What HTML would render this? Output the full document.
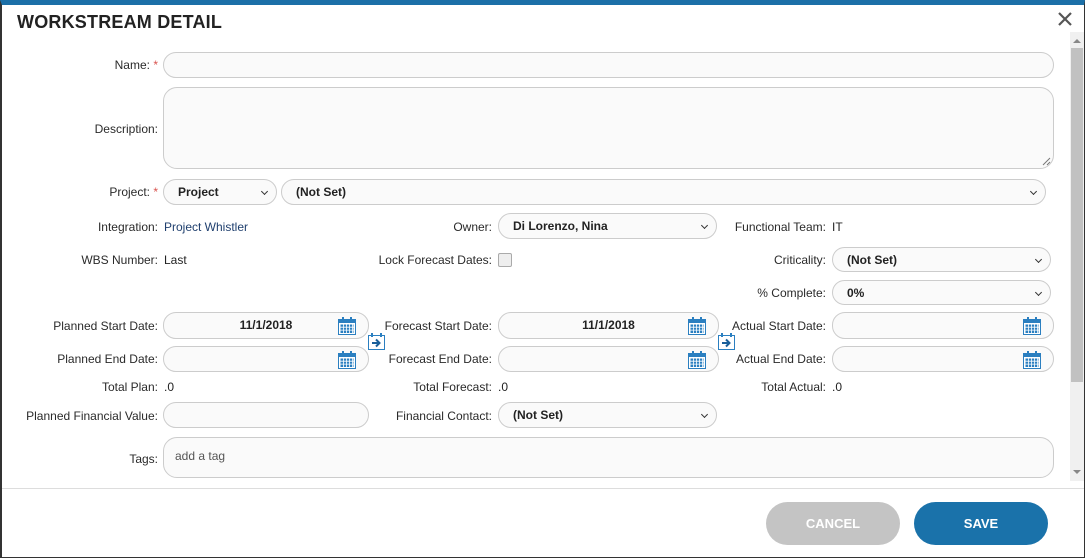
<!DOCTYPE html>
<html><head><style>
*{box-sizing:border-box;margin:0;padding:0}
body{width:1085px;height:558px;position:relative;background:#fff;font-family:"Liberation Sans",sans-serif;font-size:12px;color:#222;overflow:hidden}
.frame{position:absolute;left:0;top:0;width:1085px;height:558px;border:1px solid #333;border-left:2px solid #333;border-top:5px solid #1c70a8}
.l{position:absolute;text-align:right;white-space:nowrap;line-height:14px;color:#2a2a2a}
.l1{left:0;width:158px}.l2{left:300px;width:192px}.l3{left:640px;width:186px}
.v{position:absolute;white-space:nowrap;line-height:14px}
.in{position:absolute;border:1px solid #ccc;border-radius:13px;background:#fafafa}
.sel{font-weight:bold;padding-left:14px;line-height:24px;color:#222}
.sel:after{content:"";position:absolute;right:9px;top:9px;width:4px;height:4px;border-right:1.5px solid #333;border-bottom:1.5px solid #333;transform:rotate(45deg)}
.date{text-align:center;font-weight:bold;line-height:25px}
.cal{position:absolute;right:12px;top:4px}
.req{color:#d9534f}
.arr{position:absolute}
.btn{position:absolute;top:502px;height:43px;width:134px;border-radius:22px;color:#fff;font-weight:bold;font-size:13px;text-align:center;line-height:43px}
</style></head><body>
<div class="frame"></div>
<div style="position:absolute;left:17px;top:12px;font-size:18px;font-weight:bold;color:#222;letter-spacing:0.2px">WORKSTREAM DETAIL</div>
<svg style="position:absolute;left:1057px;top:11px" width="16" height="16"><path d="M2 2L14 14M14 2L2 14" stroke="#555" stroke-width="2.2"/></svg>
<div style="position:absolute;left:1070px;top:32px;width:14px;height:449px;background:#f0f0f0"></div>
<div style="position:absolute;left:1071px;top:48px;width:12px;height:334px;background:#c1c1c1"></div>
<div style="position:absolute;left:1073px;top:39px;border:4px solid transparent;border-bottom:4px solid #888;border-top:0"></div>
<div style="position:absolute;left:1073px;top:470px;border:4px solid transparent;border-top:4px solid #888;border-bottom:0"></div>
<div style="position:absolute;left:2px;top:488px;width:1082px;height:1px;background:#ddd"></div>

<svg width="0" height="0" style="position:absolute"><defs>
<symbol id="c" viewBox="0 0 18 18"><rect x="0.5" y="2.5" width="17" height="15" fill="#fff" stroke="#2b7fc0"/><rect x="1" y="3" width="16" height="3" fill="#2b7fc0"/><rect x="4" y="0" width="2" height="4" fill="#2b7fc0"/><rect x="12" y="0" width="2" height="4" fill="#2b7fc0"/><g fill="#2b7fc0"><rect x="2.5" y="7.5" width="13" height="8.5"/></g><g stroke="#fff" stroke-width="0.8"><path d="M5.5 7.5V16M8.5 7.5V16M11.5 7.5V16M14.5 7.5V16M2.5 10.2H15.5M2.5 13.1H15.5"/></g></symbol>
<symbol id="a" viewBox="0 0 17 17"><rect x="0.5" y="2.5" width="16" height="14" fill="#fff" stroke="#2b7fc0"/><rect x="3" y="0" width="2" height="4" fill="#2b7fc0"/><rect x="12" y="0" width="2" height="4" fill="#2b7fc0"/><path d="M4 10H11M8 6.5L11.5 10L8 13.5" stroke="#1a5f9a" stroke-width="2" fill="none"/></symbol>
</defs></svg>

<div class="l l1" style="top:58px">Name: <span class="req">*</span></div>
<div class="in" style="left:163px;top:52px;width:891px;height:26px"></div>
<div class="l l1" style="top:122px">Description:</div>
<div class="in" style="left:163px;top:87px;width:891px;height:82px;border-radius:14px"><svg style="position:absolute;right:2px;bottom:2px" width="9" height="9"><path d="M8 1L1 8M8 5L5 8" stroke="#777" stroke-width="1"/></svg></div>

<div class="l l1" style="top:185px">Project: <span class="req">*</span></div>
<div class="in sel" style="left:163px;top:179px;width:114px;height:26px">Project</div>
<div class="in sel" style="left:281px;top:179px;width:765px;height:26px">(Not Set)</div>

<div class="l l1" style="top:220px">Integration:</div>
<div class="v" style="left:164px;top:220px;color:#1f3f6e">Project Whistler</div>
<div class="l l2" style="top:220px">Owner:</div>
<div class="in sel" style="left:498px;top:213px;width:219px;height:26px">Di Lorenzo, Nina</div>
<div class="l l3" style="top:220px">Functional Team:</div>
<div class="v" style="left:832px;top:220px">IT</div>

<div class="l l1" style="top:253px">WBS Number:</div>
<div class="v" style="left:164px;top:253px">Last</div>
<div class="l l2" style="top:253px">Lock Forecast Dates:</div>
<div style="position:absolute;left:498px;top:253px;width:14px;height:14px;border:1px solid #aaa;border-radius:2px;background:#eee"></div>
<div class="l l3" style="top:253px">Criticality:</div>
<div class="in sel" style="left:832px;top:247px;width:219px;height:25px">(Not Set)</div>

<div class="l l3" style="top:286px">% Complete:</div>
<div class="in sel" style="left:832px;top:280px;width:219px;height:25px">0%</div>

<div class="l l1" style="top:319px">Planned Start Date:</div>
<div class="in date" style="left:163px;top:312px;width:206px;height:27px">11/1/2018<svg class="cal" width="18" height="18"><use href="#c"/></svg></div>
<svg class="arr" style="left:368px;top:333px" width="17" height="17"><use href="#a"/></svg>
<div class="l l2" style="top:319px">Forecast Start Date:</div>
<div class="in date" style="left:498px;top:312px;width:221px;height:27px">11/1/2018<svg class="cal" width="18" height="18"><use href="#c"/></svg></div>
<svg class="arr" style="left:718px;top:333px" width="17" height="17"><use href="#a"/></svg>
<div class="l l3" style="top:319px">Actual Start Date:</div>
<div class="in date" style="left:832px;top:312px;width:222px;height:27px"><svg class="cal" width="18" height="18"><use href="#c"/></svg></div>

<div class="l l1" style="top:352px">Planned End Date:</div>
<div class="in" style="left:163px;top:346px;width:206px;height:26px"><svg class="cal" width="18" height="18"><use href="#c"/></svg></div>
<div class="l l2" style="top:352px">Forecast End Date:</div>
<div class="in" style="left:498px;top:346px;width:221px;height:26px"><svg class="cal" width="18" height="18"><use href="#c"/></svg></div>
<div class="l l3" style="top:352px">Actual End Date:</div>
<div class="in" style="left:832px;top:346px;width:222px;height:26px"><svg class="cal" width="18" height="18"><use href="#c"/></svg></div>

<div class="l l1" style="top:380px">Total Plan:</div><div class="v" style="left:164px;top:380px">.0</div>
<div class="l l2" style="top:380px">Total Forecast:</div><div class="v" style="left:498px;top:380px">.0</div>
<div class="l l3" style="top:380px">Total Actual:</div><div class="v" style="left:832px;top:380px">.0</div>

<div class="l l1" style="top:409px">Planned Financial Value:</div>
<div class="in" style="left:163px;top:402px;width:206px;height:26px"></div>
<div class="l l2" style="top:409px">Financial Contact:</div>
<div class="in sel" style="left:498px;top:402px;width:219px;height:26px">(Not Set)</div>

<div class="l l1" style="top:452px">Tags:</div>
<div class="in" style="left:163px;top:437px;width:891px;height:41px;border-radius:14px"><span style="position:absolute;left:11px;top:11px;color:#555">add a tag</span></div>

<div class="btn" style="left:766px;background:#c4c4c4">CANCEL</div>
<div class="btn" style="left:914px;background:#1a72aa">SAVE</div>
</body></html>
